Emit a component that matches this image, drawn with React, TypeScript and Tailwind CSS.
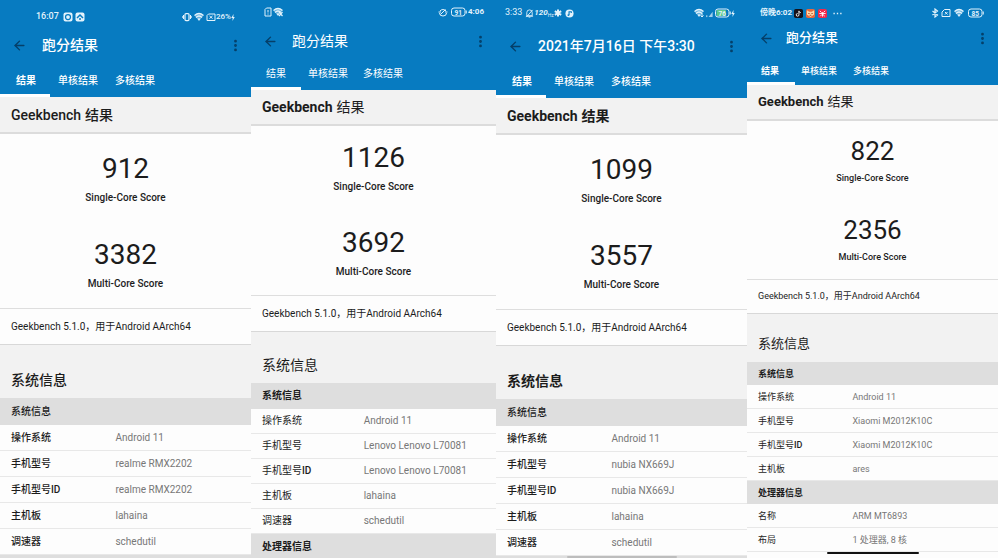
import type { ReactNode } from "react";
import { ArrowLeft, EllipsisVertical } from "lucide-react";

type Section = { title: string; rows: [string, string][] };

type Sizes = {
  status: string;
  titleBar: string;
  back: string;
  title: string;
  tabs: string;
  tab: string;
  firstTab: string;
  tabGap: string;
  band: string;
  bandSuffix: string;
  scores: string;
  score: string;
  scoreGap: string;
  caption: string;
  version: string;
  infoHeading: string;
  sectionRow: string;
  row: string;
  labelColumn: string;
  label: string;
};

type Phone = {
  id: string;
  title: string;
  left: ReactNode;
  right: ReactNode;
  single: number;
  multi: number;
  sections: Section[];
  sizes: Sizes;
  home?: string;
};

const Svg = ({ children, className = "size-[10px]" }: { children: ReactNode; className?: string }) => (
  <svg viewBox="0 0 20 20" className={`${className} shrink-0`} fill="none" stroke="currentColor" strokeWidth="2" aria-hidden="true">
    {children}
  </svg>
);

const Wifi = ({ children }: { children?: ReactNode }) => (
  <Svg>
    <path d="M1 7Q10 -1 19 7L10 18Z" fill="currentColor" stroke="none" opacity=".45" />
    <path d="M1 7Q10 -1 19 7M4 11Q10 5 16 11" strokeWidth="2.4" />
    <path d="M7 13.500Q10 11 13 13.500L10 17.500Z" fill="currentColor" stroke="none" />
    {children}
  </Svg>
);

const Battery = ({ level, green = false }: { level: string; green?: boolean }) => (
  <svg viewBox="0 0 32 20" className="h-[10px] w-4 shrink-0" fill="none" stroke="currentColor" strokeWidth="2" aria-hidden="true">
    <rect x="1" y="2" width="27" height="16" rx="5" />
    {green && <rect x="3" y="4" width="19" height="12" rx="2" fill="#5fc98b" stroke="none" />}
    <path d="M30.500 7v6" />
    <text x="14.500" y="15" textAnchor="middle" fontSize="13" fontWeight="700" fill="currentColor" stroke="none">
      {level}
    </text>
  </svg>
);

const Bolt = () => (
  <svg viewBox="0 0 6 12" className="h-[7px] w-1 shrink-0" fill="currentColor" aria-hidden="true">
    <path d="M4 0L0 7h2.500L2 12l4-7H3.500z" />
  </svg>
);

const realmeLeft = (
  <>
    <span className="mr-[2px] text-[9px] font-medium">16:07</span>
    <Svg className="ml-[2px] size-[10px]">
      <rect x="1" y="1" width="18" height="18" rx="4" fill="currentColor" stroke="none" />
      <circle cx="10" cy="10" r="5" stroke="#077bc1" strokeWidth="2.500" />
    </Svg>
    <Svg className="ml-[2px] size-[10px]">
      <rect x="1" y="1" width="18" height="18" rx="4" fill="currentColor" stroke="none" />
      <path d="M4 12L10 6l6 6" stroke="#077bc1" strokeWidth="3" />
      <circle cx="10" cy="14" r="2" fill="#077bc1" stroke="none" />
    </Svg>
  </>
);

const realmeRight = (
  <>
    <Svg>
      <rect x="6" y="3" width="8" height="14" rx="2" strokeWidth="2.500" />
      <path d="M3 6v8M17 6v8M.8 8.500v3M19.200 8.500v3" />
    </Svg>
    <span className="w-[2px]" />
    <Wifi />
    <Svg className="ml-[2px] size-[10px]">
      <path d="M5 4h13v13H2V7z" />
      <path d="M7 8l6 5M13 8l-6 5" />
    </Svg>
    <span className="text-[8px] font-medium">26%</span>
    <Bolt />
  </>
);

const lenovoLeft = (
  <>
    <Svg>
      <path d="M7 2h9v16H4V5z" />
      <path d="M10 6v5M10 13v2" />
    </Svg>
    <Wifi>
      <path d="M12 10l7 8M19 10l-7 8" strokeWidth="2.400" />
    </Wifi>
  </>
);

const lenovoRight = (
  <>
    <Svg>
      <path d="M3 12a7 6 0 0 0 14 0M4 8a7 6 0 0 1 12 0M1 10h5M14 10h5M5 15L15 5" />
    </Svg>
    <span className="w-[3px]" />
    <Battery level="91" />
    <span className="ml-[1px] text-[8px] font-bold">4:06</span>
  </>
);

const nubiaLeft = (
  <>
    <span className="mr-[3px] text-[9px]">3:33</span>
    <Svg className="size-[9px]">
      <path d="M4 15V8a6 6 0 0 1 12 0v7zM2 16h16M8 18h4M3 18L17 2" />
    </Svg>
    <span className="text-[8px] font-bold italic">120</span>
    <span className="mt-1 text-[5px] leading-none">Hz</span>
    <Svg className="size-[8px]">
      <path d="M10 1v18M2 5.500l16 9M2 14.500l16-9" strokeWidth="5" />
    </Svg>
    <Svg className="ml-[3px] size-[9px]">
      <circle cx="10" cy="10" r="9" fill="currentColor" stroke="none" />
      <path d="M9 14V6h5v3" stroke="#077bc1" strokeWidth="2.500" />
      <circle cx="7.500" cy="13.500" r="2" fill="#077bc1" stroke="none" />
    </Svg>
  </>
);

const nubiaRight = (
  <>
    <Wifi>
      <path d="M16 10v8M13 15l3 3 3-3" />
    </Wifi>
    <Svg className="mx-[1px] size-[9px]">
      <path d="M8 18h9V6z" fill="currentColor" stroke="none" opacity=".7" />
      <path d="M4 14v4" />
    </Svg>
    <Battery level="76" green />
    <Bolt />
  </>
);

const xiaomiLeft = (
  <>
    <span className="mr-[2px] text-[8px] font-bold">傍晚6:02</span>
    <Svg className="size-[9px]">
      <rect width="20" height="20" rx="4" fill="#16121a" stroke="none" />
      <path d="M11 4v9a3 3 0 1 1-3-3M11 5q1 3 4 3" stroke="#fff" />
    </Svg>
    <Svg className="ml-[3px] size-[9px]">
      <rect width="20" height="20" rx="4" fill="#e9683c" stroke="none" />
      <path d="M2 3l5 3h6l5-3v9l-8 6-8-6z" fill="#ffd9a8" stroke="none" />
      <path d="M5 10h3M12 10h3M8 14h4" stroke="#a53a25" />
    </Svg>
    <Svg className="ml-[3px] size-[9px]">
      <rect width="20" height="20" rx="4" fill="#f0284c" stroke="none" />
      <path d="M4 4l4 4M16 4l-4 4M3 10h14M10 7v10M5 16l4-4M15 16l-4-4" stroke="#fff" />
    </Svg>
    <Svg className="ml-[6px] size-[9px]">
      <path d="M1 10h3M8.500 10h3M16 10h3" strokeWidth="3" />
    </Svg>
  </>
);

const xiaomiRight = (
  <>
    <Svg>
      <path d="M5 6l10 8-5 4V2l5 4-10 8" strokeWidth="2.400" />
    </Svg>
    <Svg className="mr-[3px] ml-[1px] size-[10px]">
      <path d="M7 3h11v14H2V8z" />
      <path d="M8 8l5 5M13 8l-5 5" />
    </Svg>
    <Wifi />
    <span className="w-[4px]" />
    <Battery level="85" />
  </>
);

const large: Sizes = {
  status: "h-[34px] pl-9 pr-4",
  titleBar: "h-[22px]",
  back: "mr-[15px]",
  title: "text-sm font-medium",
  tabs: "pt-[17px] text-[10px] font-medium",
  tab: "pb-[5px]",
  firstTab: "w-[50px] pl-4 font-bold",
  tabGap: "pl-2 pr-[9px]",
  band: "h-[37px] text-sm font-medium",
  bandSuffix: "font-medium",
  scores: "pt-[19px] pb-[17px]",
  score: "text-[28px]",
  scoreGap: "mt-[34px]",
  caption: "mt-[6px] text-[10px]",
  version: "h-[35px] text-[10px]",
  infoHeading: "pt-[25px] pb-2 text-sm font-medium",
  sectionRow: "h-[27px] font-medium",
  row: "h-[26px]",
  labelColumn: "w-[46%]",
  label: "font-medium",
};

const largeTall: Sizes = {
  ...large,
  status: "h-[26px] pl-[9px] pr-3",
  titleBar: "h-10",
  tabs: "pt-2 text-[10px] font-medium",
  band: "h-[37px] text-sm font-bold",
  bandSuffix: "font-bold",
  infoHeading: "pt-[25px] pb-2 text-sm font-bold",
};

const medium: Sizes = {
  ...large,
  status: "h-6 pl-3 pr-3",
  titleBar: "h-[34px]",
  back: "mr-[14px]",
  title: "text-sm font-normal",
  tabs: "pt-2 text-[10px] font-normal",
  firstTab: "w-[50px] pl-[15px]",
  tabGap: "pl-[7px] pr-[7px]",
  band: "h-9 text-sm font-bold",
  bandSuffix: "font-normal",
  scores: "pt-4 pb-4",
  scoreGap: "mt-[33px]",
  infoHeading: "pt-[23px] pb-2 text-sm font-normal",
  sectionRow: "h-[26px] font-bold",
  row: "h-[25px]",
  label: "font-normal",
};

const small: Sizes = {
  ...large,
  status: "h-[26px] pl-[13px] pr-[14px]",
  titleBar: "h-6",
  back: "mr-3",
  title: "text-[13px] font-medium",
  tabs: "pt-[13px] text-[9px] font-medium",
  tab: "pb-[3px]",
  firstTab: "w-12 pl-[14px] font-bold",
  tabGap: "pl-[6px] pr-2",
  band: "h-9 text-[13px] font-bold",
  bandSuffix: "font-normal",
  scores: "pt-[14px] pb-[15px]",
  score: "text-[26px]",
  scoreGap: "mt-[29px]",
  caption: "mt-1 text-[9px]",
  version: "h-[33px] text-[9px]",
  infoHeading: "pt-5 pb-2 text-[13px] font-normal",
  sectionRow: "h-[23px] text-[9px] font-bold",
  row: "h-6 text-[9px]",
  labelColumn: "w-[42%]",
  label: "font-normal",
};

const phones: Phone[] = [
  {
    id: "realme",
    title: "跑分结果",
    left: realmeLeft,
    right: realmeRight,
    single: 912,
    multi: 3382,
    sizes: large,
    sections: [
      {
        title: "系统信息",
        rows: [
          ["操作系统", "Android 11"],
          ["手机型号", "realme RMX2202"],
          ["手机型号ID", "realme RMX2202"],
          ["主机板", "lahaina"],
          ["调速器", "schedutil"],
        ],
      },
    ],
  },
  {
    id: "lenovo",
    title: "跑分结果",
    left: lenovoLeft,
    right: lenovoRight,
    single: 1126,
    multi: 3692,
    sizes: medium,
    sections: [
      {
        title: "系统信息",
        rows: [
          ["操作系统", "Android 11"],
          ["手机型号", "Lenovo Lenovo L70081"],
          ["手机型号ID", "Lenovo Lenovo L70081"],
          ["主机板", "lahaina"],
          ["调速器", "schedutil"],
        ],
      },
      { title: "处理器信息", rows: [] },
    ],
  },
  {
    id: "nubia",
    title: "2021年7月16日 下午3:30",
    left: nubiaLeft,
    right: nubiaRight,
    single: 1099,
    multi: 3557,
    sizes: largeTall,
    home: "bottom-0 h-[2px] w-[110px] bg-[#bdbdbd]",
    sections: [
      {
        title: "系统信息",
        rows: [
          ["操作系统", "Android 11"],
          ["手机型号", "nubia NX669J"],
          ["手机型号ID", "nubia NX669J"],
          ["主机板", "lahaina"],
          ["调速器", "schedutil"],
        ],
      },
    ],
  },
  {
    id: "xiaomi",
    title: "跑分结果",
    left: xiaomiLeft,
    right: xiaomiRight,
    single: 822,
    multi: 2356,
    sizes: small,
    home: "bottom-1 h-[2px] w-[92px] bg-[#111111]",
    sections: [
      {
        title: "系统信息",
        rows: [
          ["操作系统", "Android 11"],
          ["手机型号", "Xiaomi M2012K10C"],
          ["手机型号ID", "Xiaomi M2012K10C"],
          ["主机板", "ares"],
        ],
      },
      {
        title: "处理器信息",
        rows: [
          ["名称", "ARM MT6893"],
          ["布局", "1 处理器, 8 核"],
        ],
      },
    ],
  },
];

function Score({ value, name, sizes }: { value: number; name: string; sizes: Sizes }) {
  return (
    <>
      <p className={`leading-8 ${sizes.score}`}>{value}</p>
      <p className={`leading-[14px] font-medium ${sizes.caption}`}>{name}</p>
    </>
  );
}

function RowLabel({ text }: { text: string }) {
  if (!text.endsWith("ID")) return text;
  return (
    <>
      {text.slice(0, -2)}
      <span className="font-medium">ID</span>
    </>
  );
}

function PhoneScreen({ phone }: { phone: Phone }) {
  const s = phone.sizes;
  return (
    <section className="relative min-w-0 overflow-hidden bg-[#fdfdfd]">
      <header className="bg-[#077bc1] text-white">
        <div className={`flex items-center justify-between text-[#e3f3fc] ${s.status}`}>
          <div className="flex items-center">{phone.left}</div>
          <div className="flex items-center">{phone.right}</div>
        </div>
        <div className={`flex items-center pr-2 pl-3 ${s.titleBar}`}>
          <button type="button" aria-label="返回" className={`text-[#053f68] ${s.back}`}>
            <ArrowLeft className="size-[15px]" strokeWidth={2.25} />
          </button>
          <h1 className={`flex-1 whitespace-nowrap ${s.title}`}>{phone.title}</h1>
          <button type="button" aria-label="更多" className="text-[#053f68]">
            <EllipsisVertical className="size-[15px]" strokeWidth={2.5} />
          </button>
        </div>
        <nav className={`flex leading-4 whitespace-nowrap ${s.tabs}`}>
          <button type="button" aria-current="page" className={`border-b-3 border-white text-left ${s.tab} ${s.firstTab}`}>
            结果
          </button>
          <button type="button" className={`border-b-3 border-transparent ${s.tab} ${s.tabGap}`}>
            单核结果
          </button>
          <button type="button" className={`border-b-3 border-transparent pl-2 ${s.tab}`}>
            多核结果
          </button>
        </nav>
      </header>

      <h2 className={`flex items-center gap-1 border-b-2 border-[#dcdcdc] bg-[#f2f2f2] pl-[11px] ${s.band}`}>
        <span>Geekbench</span>
        <span className={s.bandSuffix}>结果</span>
      </h2>

      <div className={`text-center ${s.scores}`}>
        <Score value={phone.single} name="Single-Core Score" sizes={s} />
        <div className={s.scoreGap}>
          <Score value={phone.multi} name="Multi-Core Score" sizes={s} />
        </div>
      </div>

      <p className={`box-content flex items-center border-t border-[#dedede] pl-[11px] whitespace-nowrap ${s.version}`}>
        Geekbench 5.1.0，用于Android AArch64
      </p>

      <h2 className={`border-t border-[#d8d8d8] bg-[#f2f2f2] pl-[11px] leading-5 ${s.infoHeading}`}>系统信息</h2>

      <table className="w-full table-fixed border-separate border-spacing-0 text-left text-[10px] leading-4">
        <colgroup>
          <col className={s.labelColumn} />
          <col />
        </colgroup>
        {phone.sections.map((section) => (
          <tbody key={section.title}>
            <tr>
              <th colSpan={2} scope="colgroup" className={`bg-[#dedede] p-0 pl-[11px] ${s.sectionRow}`}>
                {section.title}
              </th>
            </tr>
            {section.rows.map(([label, value]) => (
              <tr key={label}>
                <th scope="row" className={`border-b border-[#e8e8e8] p-0 pl-[11px] ${s.row} ${s.label}`}>
                  <RowLabel text={label} />
                </th>
                <td className={`border-b border-[#e8e8e8] p-0 whitespace-nowrap text-[#777777] ${s.row}`}>{value}</td>
              </tr>
            ))}
          </tbody>
        ))}
      </table>

      {!phone.sections.some((section) => section.title === "处理器信息") && <div className="h-2 bg-[#dedede]" />}
      {phone.home && <div className={`absolute left-1/2 -translate-x-1/2 rounded-full ${phone.home}`} />}
    </section>
  );
}

export default function App() {
  return (
    <main
      lang="zh-CN"
      className="grid h-screen grid-cols-[251fr_245fr_251fr_251fr] overflow-hidden bg-white pr-[2px] font-[Roboto,'Noto_Sans_CJK_SC',sans-serif] text-[#1c1c1c]"
    >
      {phones.map((phone) => (
        <PhoneScreen key={phone.id} phone={phone} />
      ))}
    </main>
  );
}
